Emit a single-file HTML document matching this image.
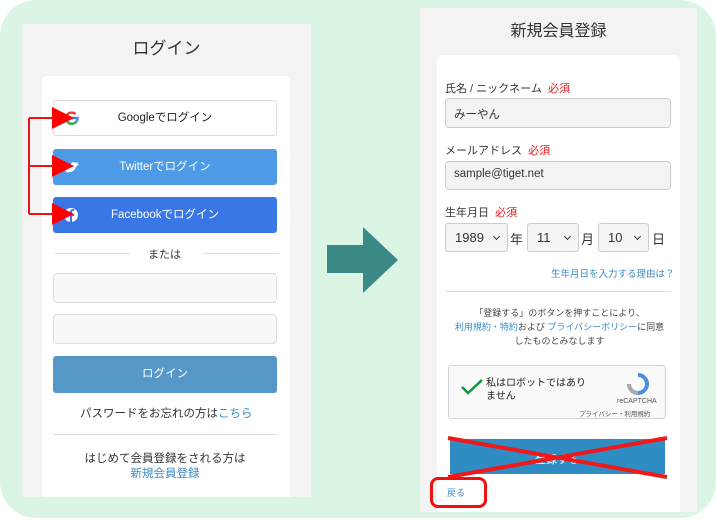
<!DOCTYPE html>
<html><head><meta charset="utf-8"><style>
*{margin:0;padding:0;box-sizing:border-box}
body{width:716px;height:521px;background:#fff;position:relative;overflow:hidden;font-family:"Liberation Sans","Noto Sans CJK JP",sans-serif;color:#333}
.a{position:absolute}
.green{left:0;top:0;width:716px;height:518px;background:#dbf5e4;border-radius:36px}
.gray{background:#f3f3f3}
.card{background:#fff;border-radius:5px}
.btn{position:absolute;border-radius:3px;font-size:11.5px;text-align:center;line-height:36px}
.inp{position:absolute;background:#f8f8f8;border:1px solid #ddd;border-radius:4px}
.t{position:absolute;font-size:11px;white-space:nowrap}
.link{color:#3a8cc6}
.red{color:#e02020}
.sel{position:absolute;top:223px;height:29px;background:#f4f4f4;border:1px solid #ccc;border-radius:3px;font-size:13px;line-height:27px;padding-left:9px}
.sel:after{content:"";position:absolute;right:8px;top:10px;width:4px;height:4px;border-right:1.5px solid #333;border-bottom:1.5px solid #333;transform:rotate(45deg)}
</style></head><body>
<div class="a green"></div>
<div class="a gray" style="left:22px;top:24px;width:289px;height:473px"></div>
<div class="a card" style="left:42px;top:76px;width:248px;height:421px;border-radius:5px 5px 0 0"></div>
<div class="t" style="left:22px;width:289px;text-align:center;top:34px;font-size:17px">ログイン</div>
<div class="btn" style="left:53px;top:100px;width:224px;height:36px;background:#fff;border:1px solid #ddd;color:#222;line-height:34px">Googleでログイン</div>
<div class="btn" style="left:53px;top:149px;width:224px;height:36px;background:#4d9ae6;color:#fff">Twitterでログイン</div>
<div class="btn" style="left:53px;top:197px;width:224px;height:36px;background:#3977e6;color:#fff">Facebookでログイン</div>
<svg class="a" style="left:60px;top:108px" width="22" height="120" viewBox="0 0 22 120">
<path d="M15.5 6a6 6 0 0 0-9 1.5" fill="none" stroke="#ea4335" stroke-width="2.5"/>
<path d="M6.5 7.5a6 6 0 0 0 0 5" fill="none" stroke="#fbbc05" stroke-width="2.5"/>
<path d="M6.5 12.5a6 6 0 0 0 10 1" fill="none" stroke="#34a853" stroke-width="2.5"/>
<path d="M16.5 13.5a6 6 0 0 0 1-3.5h-6" fill="none" stroke="#4285f4" stroke-width="2.5"/>
<path d="M6 64c4 1 9-1 10-5 1-1 2-2 3-3-1 0-2 0-2 0 1-1 1-1 1-2-1 0-2 1-2 1-3-2-6 0-5 3-3 0-5-2-7-3-1 2 0 4 1 4l-1 0c0 2 1 3 2 3l-1 0c0 1 2 2 3 2-1 1-2 1-2 0z" fill="#fff"/>
<circle cx="11" cy="107" r="7" fill="#fff"/><path d="M12 114v-6h2v-2h-2v-2c0-1 1-1 2-1v-2c-3 0-4 1-4 3v2H8v2h2v6z" fill="#3977e6"/>
</svg>
<svg class="a" style="left:0;top:0" width="90" height="240">
<path d="M29 118V214M29 118H54M29 166H54M29 214H54" stroke="#e8151b" stroke-width="2" fill="none"/>
<path d="M52 107L74 118L52 129zM52 155L74 166L52 177zM52 203L74 214L52 225z" fill="#f00"/>
</svg>
<div style="position:absolute;left:55px;top:253px;width:75px;height:1px;background:#ddd"></div>
<div style="position:absolute;left:204px;top:253px;width:75px;height:1px;background:#ddd"></div>
<div class="t" style="left:148px;top:246px">または</div>
<div class="inp" style="left:53px;top:273px;width:224px;height:30px"></div>
<div class="inp" style="left:53px;top:314px;width:224px;height:30px"></div>
<div class="btn" style="left:53px;top:356px;width:224px;height:37px;background:#5597c6;color:#fff;line-height:37px">ログイン</div>
<div class="t" style="left:80px;top:405px;font-size:11.5px">パスワードをお忘れの方は<span class="link">こちら</span></div>
<div style="position:absolute;left:53px;top:434px;width:224px;height:1px;background:#ddd"></div>
<div class="t" style="left:53px;width:224px;text-align:center;top:450px;font-size:11.5px">はじめて会員登録をされる方は</div>
<div class="t link" style="left:53px;width:224px;text-align:center;top:465px;font-size:11.5px">新規会員登録</div>
<svg class="a" style="left:326px;top:227px" width="74" height="66"><path d="M1 18H37V0L72 33L37 66V46H1z" fill="#3b8a86"/></svg>
<div class="a gray" style="left:420px;top:8px;width:277px;height:504px"></div>
<div class="a card" style="left:437px;top:55px;width:243px;height:457px;border-radius:5px 5px 0 0"></div>
<div class="t" style="left:420px;width:277px;text-align:center;top:17px;font-size:16px">新規会員登録</div>
<div class="t" style="left:445px;top:80px">氏名 / ニックネーム <span class="red">&nbsp;必須</span></div>
<div class="inp" style="left:445px;top:98px;width:226px;height:30px;background:#f3f3f3;border-color:#ccc"></div>
<div class="t" style="left:454px;top:106px;font-size:11.5px">みーやん</div>
<div class="t" style="left:445px;top:142px">メールアドレス <span class="red">&nbsp;必須</span></div>
<div class="inp" style="left:445px;top:161px;width:226px;height:29px;background:#f3f3f3;border-color:#ccc"></div>
<div class="t" style="left:454px;top:168px;font-size:11.5px">sample@tiget.net</div>
<div class="t" style="left:445px;top:204px">生年月日 <span class="red">&nbsp;必須</span></div>
<div class="sel" style="left:445px;width:63px">1989</div><div class="t" style="left:510px;top:229px;font-size:13px">年</div>
<div class="sel" style="left:527px;width:52px">11</div><div class="t" style="left:581px;top:229px;font-size:13px">月</div>
<div class="sel" style="left:598px;width:51px">10</div><div class="t" style="left:652px;top:229px;font-size:13px">日</div>
<div class="t link" style="left:551px;top:266px;font-size:9.5px">生年月日を入力する理由は？</div>
<div style="position:absolute;left:445px;top:291px;width:226px;height:1px;background:#ddd"></div>
<div class="t" style="left:438px;width:243px;text-align:center;top:306px;font-size:9px;line-height:14px;color:#444">「登録する」のボタンを押すことにより、<br><span class="link">利用規約・特約</span>および <span class="link">プライバシーポリシー</span>に同意<br>したものとみなします</div>
<div class="a" style="left:448px;top:365px;width:218px;height:54px;background:#f9f9f9;border:1px solid #d3d3d3;border-radius:3px"></div>
<svg class="a" style="left:460px;top:378px" width="24" height="18"><path d="M2 9L8 15L22 2" stroke="#0a9b3c" stroke-width="2.5" fill="none"/></svg>
<div class="t" style="left:486px;top:377px;font-size:10px;line-height:13px;color:#222">私はロボットではあり<br>ません</div>
<svg class="a" style="left:625px;top:372px" width="26" height="24"><path d="M13 3a9 9 0 1 1-9 9" stroke="#4a90e2" stroke-width="4" fill="none"/><path d="M4 12a9 9 0 0 0 9 9" stroke="#aaa" stroke-width="4" fill="none"/></svg>
<div class="t" style="left:617px;top:398px;font-size:7px;color:#555">reCAPTCHA</div>
<div class="t" style="left:579px;top:408px;font-size:6.5px;color:#555">プライバシー・利用規約</div>
<div class="a" style="left:450px;top:439px;width:215px;height:35px;background:#2f8dc4"></div>
<div class="t" style="left:535px;top:451px;color:#fff;font-size:11px">登録する</div>
<svg class="a" style="left:445px;top:435px" width="225" height="45"><path d="M3 3L222 42M3 42L222 3" stroke="#f01818" stroke-width="4"/></svg>
<div class="t link" style="left:447px;top:486px;font-size:9px">戻る</div>
<div class="a" style="left:430px;top:477px;width:57px;height:31px;border:3px solid #f01010;border-radius:8px"></div>
</body></html>
